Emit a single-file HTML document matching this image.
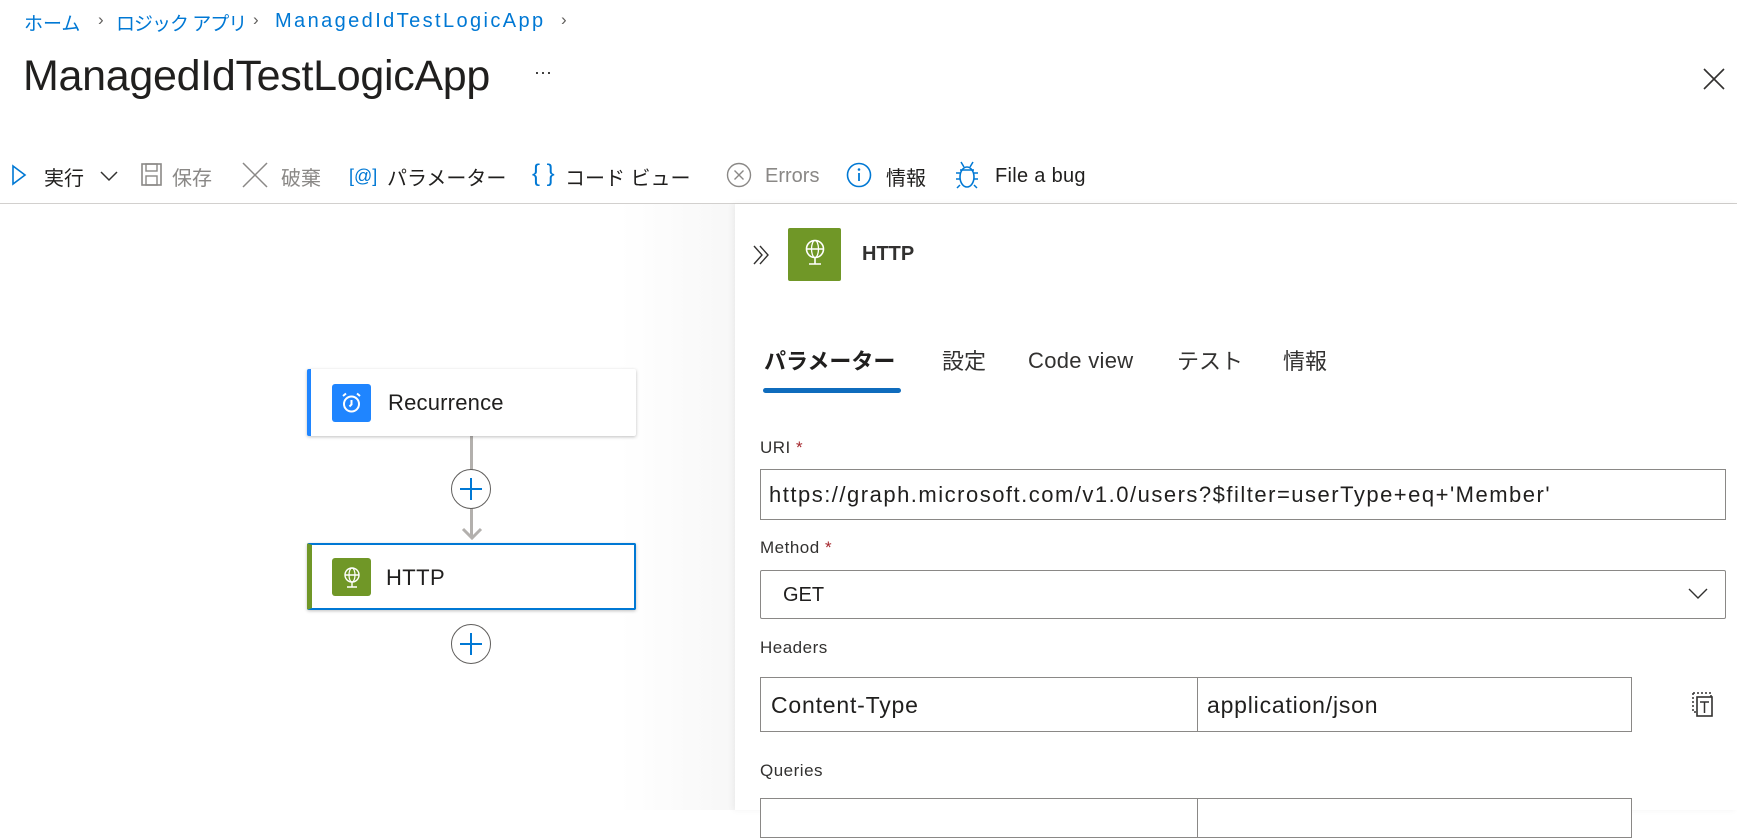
<!DOCTYPE html>
<html><head><meta charset="utf-8"><style>
*{margin:0;padding:0;box-sizing:border-box}
body{width:1737px;height:810px;overflow:hidden;background:#fff;font-family:"Liberation Sans","Noto Sans CJK JP",sans-serif;color:#201f1e;position:relative}
.a{position:absolute;white-space:nowrap}
.bc{color:#0078d4;font-size:19px;top:9px}
.sep{color:#605e5c;font-size:17px;top:10px}
.tb{top:162px;font-size:20px}
.lt{top:165px}
.g{color:#8a8886}
.lbl{font-size:17px;color:#323130;letter-spacing:0.5px}
.box{position:absolute;border:1px solid #8a8886;background:#fff}
.card{position:absolute;left:307px;width:329px;height:67px;background:#fff;box-shadow:0 1px 3px rgba(0,0,0,.25);border-radius:2px}
.plus{position:absolute;width:40px;height:40px;border:1px solid #605e5c;border-radius:50%;background:#fff}
</style></head><body>
<div class="a bc" style="left:24px">ホーム</div>
<div class="a sep" style="left:98px">›</div>
<div class="a bc" style="left:116px;letter-spacing:-1px">ロジック アプリ</div>
<div class="a sep" style="left:253px">›</div>
<div class="a bc" style="left:275px;top:10px;font-size:20px;letter-spacing:2.4px">ManagedIdTestLogicApp</div>
<div class="a sep" style="left:561px">›</div>
<div class="a" style="left:23px;top:52px;font-size:43px;color:#201f1e;letter-spacing:-0.3px">ManagedIdTestLogicApp</div>
<div class="a" style="left:534px;top:62px;font-size:18px">···</div>
<svg class="a" style="left:1702px;top:67px" width="24" height="24" viewBox="0 0 24 24"><path d="M2 2L22 22M22 2L2 22" stroke="#323130" stroke-width="1.6"/></svg>

<svg class="a" style="left:11px;top:164px" width="16" height="22" viewBox="0 0 16 22"><path d="M2 2L14 11L2 20Z" fill="none" stroke="#0078d4" stroke-width="1.6"/></svg>
<div class="a tb" style="left:44px">実行</div>
<svg class="a" style="left:100px;top:170px" width="18" height="12" viewBox="0 0 18 12"><path d="M1 2L9 10L17 2" fill="none" stroke="#323130" stroke-width="1.5"/></svg>
<svg class="a" style="left:141px;top:163px" width="21" height="23" viewBox="0 0 21 23"><rect x="1" y="1" width="19" height="21" fill="none" stroke="#8a8886" stroke-width="1.6"/><rect x="5" y="1" width="11" height="7" fill="none" stroke="#8a8886" stroke-width="1.4"/><rect x="5" y="13" width="11" height="9" fill="none" stroke="#8a8886" stroke-width="1.4"/></svg>
<div class="a tb g" style="left:172px">保存</div>
<svg class="a" style="left:242px;top:162px" width="26" height="26" viewBox="0 0 26 26"><path d="M1 1L25 25M25 1L1 25" stroke="#8a8886" stroke-width="1.5"/></svg>
<div class="a tb g" style="left:281px">破棄</div>
<div class="a" style="left:349px;top:166px;font-size:18px;color:#0078d4">[@]</div>
<div class="a tb" style="left:387px">パラメーター</div>
<div class="a" style="left:532px;top:160px;font-size:24px;color:#0078d4">{ }</div>
<div class="a tb" style="left:565px">コード ビュー</div>
<svg class="a" style="left:726px;top:162px" width="26" height="26" viewBox="0 0 26 26"><circle cx="13" cy="13" r="11.5" fill="none" stroke="#8a8886" stroke-width="1.4"/><path d="M8.5 8.5L17.5 17.5M17.5 8.5L8.5 17.5" stroke="#8a8886" stroke-width="1.4"/></svg>
<div class="a tb lt g" style="left:765px">Errors</div>
<svg class="a" style="left:846px;top:162px" width="26" height="26" viewBox="0 0 26 26"><circle cx="13" cy="13" r="11.5" fill="none" stroke="#0078d4" stroke-width="1.6"/><path d="M13 11V19" stroke="#0078d4" stroke-width="1.8"/><circle cx="13" cy="7.5" r="1.3" fill="#0078d4"/></svg>
<div class="a tb" style="left:886px">情報</div>
<svg class="a" style="left:955px;top:160px" width="24" height="30" viewBox="0 0 24 30"><path d="M6 2L9 7M18 2L15 7" stroke="#0078d4" stroke-width="1.5"/><ellipse cx="12" cy="17" rx="7" ry="10" fill="none" stroke="#0078d4" stroke-width="1.6"/><path d="M5 13H1M19 13H23M5 19H1M19 19H23M5 25L2 28M19 25L22 28M5 10H19" stroke="#0078d4" stroke-width="1.5"/></svg>
<div class="a tb lt" style="left:995px;letter-spacing:0.3px">File a bug</div>
<div class="a" style="left:0;top:203px;width:1737px;height:1px;background:#d2d0ce"></div>

<div class="a" style="left:620px;top:204px;width:115px;height:606px;background:linear-gradient(to right,#fff,#f7f7f7)"></div>

<div class="a" style="left:470px;top:436px;width:3px;height:102px;background:#b3b0ad"></div>
<svg class="a" style="left:461px;top:526px" width="22" height="16" viewBox="0 0 22 16"><path d="M2 3L11 12L20 3" fill="none" stroke="#b3b0ad" stroke-width="3"/></svg>
<div class="card" style="top:369px;border-left:4px solid #1f85ff">
 <div class="a" style="left:21px;top:15px;width:39px;height:38px;background:#1f85ff;border-radius:3px"></div>
 <svg class="a" style="left:30px;top:23px" width="21" height="22" viewBox="0 0 21 22"><circle cx="10.5" cy="12" r="7.5" fill="none" stroke="#fff" stroke-width="2"/><path d="M10.5 8V12.5L8.5 14.5M2 4L5 1.5M19 4L16 1.5" stroke="#fff" stroke-width="2" fill="none"/></svg>
 <div class="a" style="left:77px;top:21px;font-size:22px;letter-spacing:0.2px">Recurrence</div>
</div>
<div class="plus" style="left:451px;top:469px"><svg width="38" height="38" viewBox="0 0 38 38"><path d="M19 8V30M8 19H30" stroke="#0078d4" stroke-width="2"/></svg></div>
<div class="card" style="top:543px;height:67px;border:2px solid #0078d4;border-left:5px solid #709727">
 <div class="a" style="left:20px;top:13px;width:39px;height:38px;background:#709727;border-radius:3px"></div>
 <svg class="a" style="left:30px;top:21px" width="20" height="24" viewBox="0 0 20 24"><circle cx="10" cy="9" r="7" fill="none" stroke="#fff" stroke-width="1.4"/><ellipse cx="10" cy="9" rx="3" ry="7" fill="none" stroke="#fff" stroke-width="1.2"/><path d="M3 9H17M10 16V21M5 21H15" stroke="#fff" stroke-width="1.4"/></svg>
 <div class="a" style="left:74px;top:20px;font-size:22px;letter-spacing:0.4px">HTTP</div>
</div>
<div class="plus" style="left:451px;top:624px"><svg width="38" height="38" viewBox="0 0 38 38"><path d="M19 8V30M8 19H30" stroke="#0078d4" stroke-width="2"/></svg></div>

<div class="a" style="left:735px;top:204px;width:1002px;height:606px;background:#fff;box-shadow:-2px 0 6px rgba(0,0,0,.05)"></div>
<svg class="a" style="left:752px;top:244px" width="18" height="22" viewBox="0 0 18 22"><path d="M2 2L10 11L2 20M8 2L16 11L8 20" fill="none" stroke="#323130" stroke-width="1.4"/></svg>
<div class="a" style="left:788px;top:228px;width:53px;height:53px;background:#709727;border-radius:2px"></div>
<svg class="a" style="left:803px;top:238px" width="24" height="32" viewBox="0 0 24 32"><circle cx="12" cy="11" r="8.5" fill="none" stroke="#fff" stroke-width="1.6"/><ellipse cx="12" cy="11" rx="3.5" ry="8.5" fill="none" stroke="#fff" stroke-width="1.3"/><path d="M3.5 11H20.5M12 19.5V26M6 26H18" stroke="#fff" stroke-width="1.6"/></svg>
<div class="a" style="left:862px;top:243px;font-size:20px;font-weight:bold;color:#323130">HTTP</div>

<div class="a" style="left:764px;top:344px;font-size:22px;font-weight:bold;color:#201f1e">パラメーター</div>
<div class="a" style="left:942px;top:344px;font-size:22px;color:#323130">設定</div>
<div class="a" style="left:1028px;top:348px;font-size:22px;color:#323130;letter-spacing:0.3px">Code view</div>
<div class="a" style="left:1177px;top:344px;font-size:22px;color:#323130">テスト</div>
<div class="a" style="left:1283px;top:344px;font-size:22px;color:#323130">情報</div>
<div class="a" style="left:763px;top:388px;width:138px;height:5px;background:#0f6cbd;border-radius:3px"></div>

<div class="a lbl" style="left:760px;top:438px">URI <span style="color:#a4262c">*</span></div>
<div class="box" style="left:760px;top:469px;width:966px;height:51px"></div>
<div class="a" style="left:769px;top:482px;font-size:22px;letter-spacing:1.5px">https://graph.microsoft.com/v1.0/users?$filter=userType+eq+'Member'</div>
<div class="a lbl" style="left:760px;top:538px">Method <span style="color:#a4262c">*</span></div>
<div class="box" style="left:760px;top:570px;width:966px;height:49px;border-radius:2px"></div>
<div class="a" style="left:783px;top:584px;font-size:20px">GET</div>
<svg class="a" style="left:1688px;top:588px" width="20" height="12" viewBox="0 0 20 12"><path d="M1 1L10 10L19 1" fill="none" stroke="#323130" stroke-width="1.4"/></svg>
<div class="a lbl" style="left:760px;top:638px">Headers</div>
<div class="box" style="left:760px;top:677px;width:438px;height:55px"></div>
<div class="box" style="left:1197px;top:677px;width:435px;height:55px"></div>
<div class="a" style="left:771px;top:692px;font-size:23px;letter-spacing:0.8px">Content-Type</div>
<div class="a" style="left:1207px;top:692px;font-size:23px;letter-spacing:0.8px">application/json</div>
<svg class="a" style="left:1689px;top:690px" width="26" height="28" viewBox="0 0 26 28"><path d="M4 3H22V7M4 3V22H8" fill="none" stroke="#323130" stroke-width="1.5" stroke-dasharray="2 2"/><rect x="8" y="7" width="15" height="19" fill="#fff" stroke="#323130" stroke-width="1.6"/><path d="M11 12H20M15.5 12V23" stroke="#323130" stroke-width="1.5"/></svg>
<div class="a lbl" style="left:760px;top:761px">Queries</div>
<div class="box" style="left:760px;top:798px;width:438px;height:40px"></div>
<div class="box" style="left:1197px;top:798px;width:435px;height:40px"></div>
</body></html>
